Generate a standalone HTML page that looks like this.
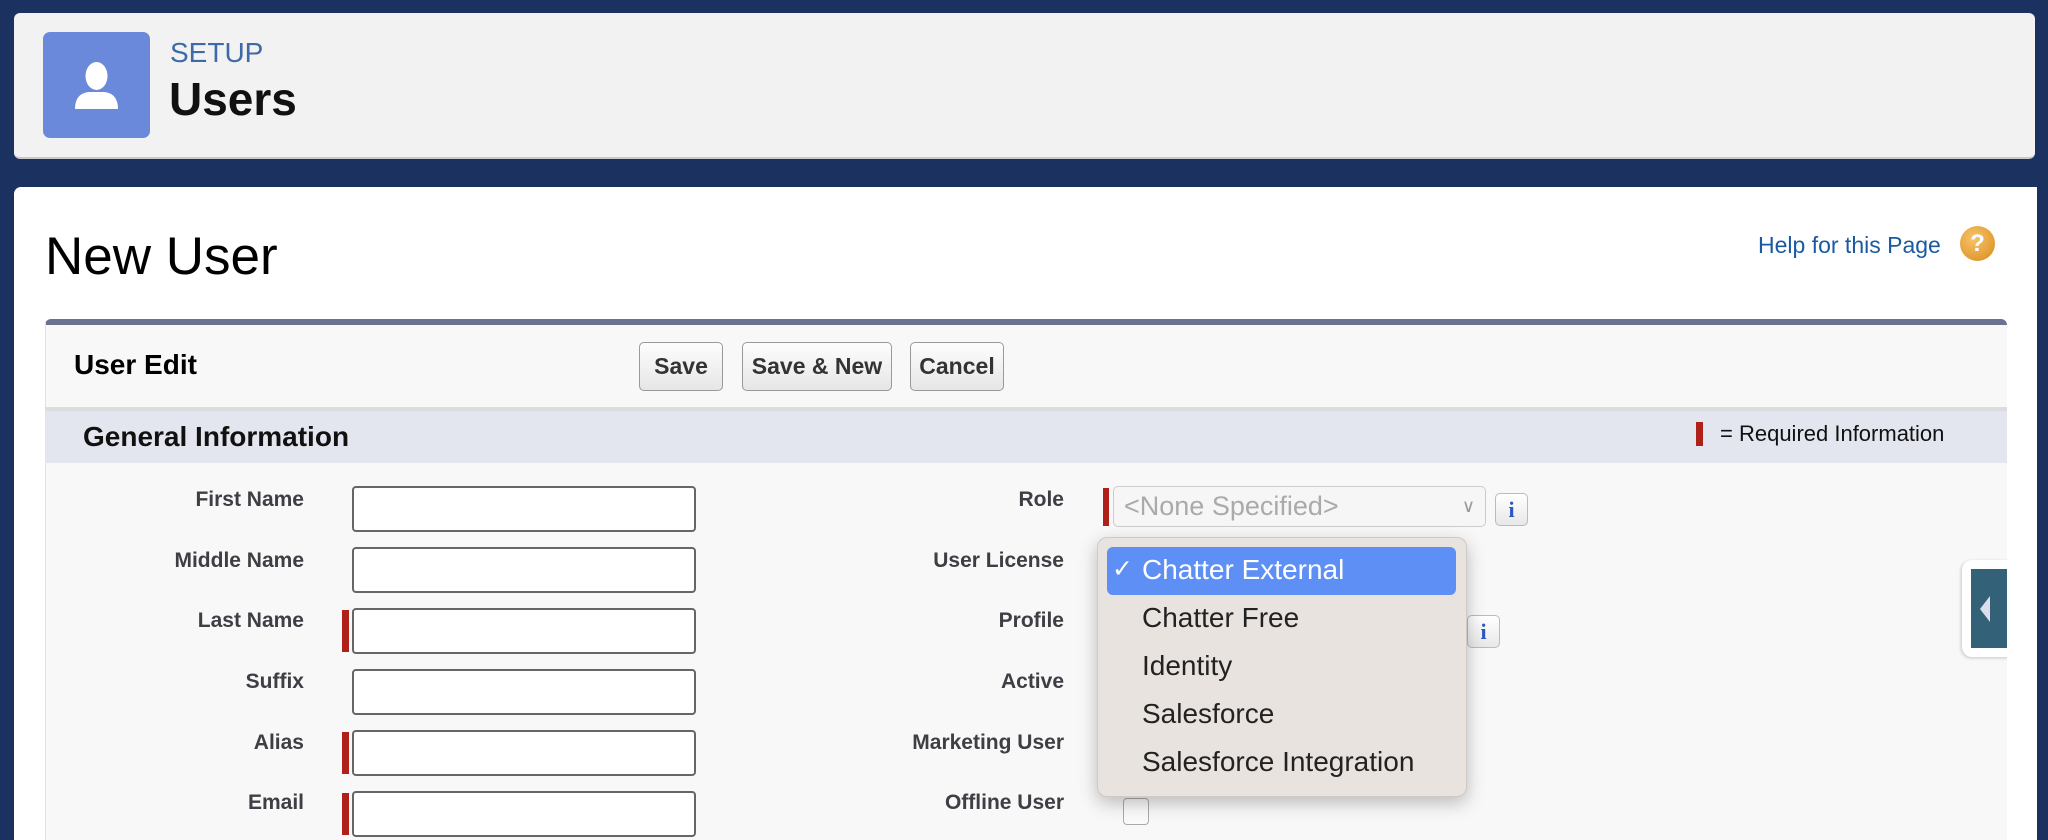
<!DOCTYPE html>
<html style="width:2048px;height:840px;overflow:hidden"><head><meta charset="utf-8"><style>
*{margin:0;padding:0;box-sizing:border-box}
body{width:2048px;height:840px;overflow:hidden;background:#1b3160;font-family:"Liberation Sans",Arial,sans-serif;position:relative}
.a{position:absolute}
.lbl{position:absolute;right:1744px;font-size:21px;font-weight:bold;color:#3e3e44;text-align:right;white-space:nowrap}
.lbl2{position:absolute;right:984px;font-size:21px;font-weight:bold;color:#3e3e44;text-align:right;white-space:nowrap}
.inp{position:absolute;left:352px;width:344px;height:46px;background:#fff;border:2px solid #666;border-radius:4px}
.req{position:absolute;left:342px;width:7px;height:42px;background:#b0201b}
.btn{position:absolute;top:342px;height:49px;border:1.5px solid #999;border-radius:5px;background:linear-gradient(#fdfdfd,#e6e6e6);font-size:23px;font-weight:bold;color:#333;text-align:center;line-height:46px}
.ib{position:absolute;width:33px;height:33px;border:1.5px solid #bbb;border-radius:5px;background:linear-gradient(#fff,#e8e8e8);color:#2b58c4;font-family:"Liberation Serif",serif;font-weight:bold;font-size:22px;text-align:center;line-height:32px}
.opt{position:absolute;left:1142px;font-size:28px;color:#222;white-space:nowrap}
</style></head><body>
<div class="a" style="left:14px;top:13px;width:2021px;height:146px;background:#f2f2f2;border-radius:6px;border-bottom:2px solid #c9c9c9"></div>
<div class="a" style="left:43px;top:32px;width:107px;height:106px;background:#6a89db;border-radius:7px">
<svg width="107" height="106" viewBox="0 0 107 106"><ellipse cx="53.5" cy="44" rx="11" ry="14" fill="#fff"/><path d="M32 77 Q32 62 45 60 L62 60 Q75 62 75 77 Z" fill="#fff"/></svg></div>
<div class="a" style="left:170px;top:37px;font-size:28px;color:#3e6ba8">SETUP</div>
<div class="a" style="left:169px;top:72px;font-size:46px;font-weight:bold;color:#111">Users</div>

<div class="a" style="left:14px;top:187px;width:2023px;height:653px;background:#fff;border-radius:7px 7px 0 0"></div>
<div class="a" style="left:45px;top:226px;font-size:53px;color:#000">New User</div>
<div class="a" style="left:1758px;top:232px;font-size:23px;color:#1b5aa3">Help for this Page</div>
<div class="a" style="left:1960px;top:226px;width:35px;height:35px;border-radius:50%;background:radial-gradient(circle at 40% 35%,#f7c46a,#d98a1c);color:#fff;font-weight:bold;font-size:24px;text-align:center;line-height:35px">?</div>

<div class="a" style="left:45px;top:319px;width:1962px;height:521px;background:#f8f8f8;border-top:6px solid #6b7291;border-radius:6px 6px 0 0;border-left:1px solid #e0e0e0"></div>
<div class="a" style="left:74px;top:349px;font-size:28px;font-weight:bold;color:#000">User Edit</div>
<div class="btn" style="left:639px;width:84px">Save</div>
<div class="btn" style="left:742px;width:150px">Save &amp; New</div>
<div class="btn" style="left:910px;width:94px">Cancel</div>
<div class="a" style="left:45px;top:407px;width:1962px;height:4px;background:#dcdcdc"></div>
<div class="a" style="left:45px;top:411px;width:1962px;height:52px;background:#e3e6ee"></div>
<div class="a" style="left:83px;top:421px;font-size:28px;font-weight:bold;color:#111">General Information</div>
<div class="a" style="left:1696px;top:422px;width:7px;height:24px;background:#b0201b"></div>
<div class="a" style="left:1720px;top:421px;font-size:22px;color:#111">= Required Information</div>

<div class="lbl" style="top:488px">First Name</div>
<div class="lbl" style="top:549px">Middle Name</div>
<div class="lbl" style="top:609px">Last Name</div>
<div class="lbl" style="top:670px">Suffix</div>
<div class="lbl" style="top:731px">Alias</div>
<div class="lbl" style="top:791px">Email</div>
<div class="inp" style="top:486px"></div>
<div class="inp" style="top:547px"></div>
<div class="inp" style="top:608px"></div><div class="req" style="top:610px"></div>
<div class="inp" style="top:669px"></div>
<div class="inp" style="top:730px"></div><div class="req" style="top:732px"></div>
<div class="inp" style="top:791px"></div><div class="req" style="top:793px"></div>

<div class="lbl2" style="top:488px">Role</div>
<div class="lbl2" style="top:549px">User License</div>
<div class="lbl2" style="top:609px">Profile</div>
<div class="lbl2" style="top:670px">Active</div>
<div class="lbl2" style="top:731px">Marketing User</div>
<div class="lbl2" style="top:791px">Offline User</div>

<div class="a" style="left:1103px;top:488px;width:6px;height:38px;background:#b0201b"></div>
<div class="a" style="left:1113px;top:486px;width:373px;height:41px;border:1.5px solid #ccc;border-radius:5px;background:#f6f6f6;color:#aaa;font-size:27px;line-height:38px;padding-left:10px">&lt;None Specified&gt;<span style="position:absolute;right:10px;top:0;font-size:18px;color:#999">&#8744;</span></div>
<div class="ib" style="left:1495px;top:493px">i</div>
<div class="ib" style="left:1467px;top:615px">i</div>
<div class="a" style="left:1123px;top:798px;width:26px;height:27px;border:1.5px solid #aaa;border-radius:4px;background:#fafafa"></div>

<div class="a" style="left:1097px;top:537px;width:370px;height:260px;background:#e8e3df;border:1px solid #cfcac6;border-radius:10px;box-shadow:0 6px 18px rgba(0,0,0,.25)"></div>
<div class="a" style="left:1107px;top:547px;width:349px;height:48px;background:#5e8ff5;border-radius:6px"></div>
<div class="a" style="left:1112px;top:554px;font-size:25px;color:#fff">&#10003;</div>
<div class="opt" style="left:1142px;top:554px;color:#fff">Chatter External</div>
<div class="opt" style="top:602px">Chatter Free</div>
<div class="opt" style="top:650px">Identity</div>
<div class="opt" style="top:698px">Salesforce</div>
<div class="opt" style="top:746px">Salesforce Integration</div>

<div class="a" style="left:1962px;top:560px;width:50px;height:97px;background:#fff;border-radius:10px 0 0 10px;box-shadow:-1px 1px 3px rgba(0,0,0,.2)"></div>
<div class="a" style="left:1971px;top:569px;width:36px;height:79px;background:#336178"></div>
<svg class="a" style="left:1978px;top:594px" width="14" height="30"><path d="M12 2 L2 15 L12 28 Z" fill="#dde"/></svg>
<div class="a" style="left:2007px;top:187px;width:30px;height:653px;background:#fff"></div>
</body></html>
